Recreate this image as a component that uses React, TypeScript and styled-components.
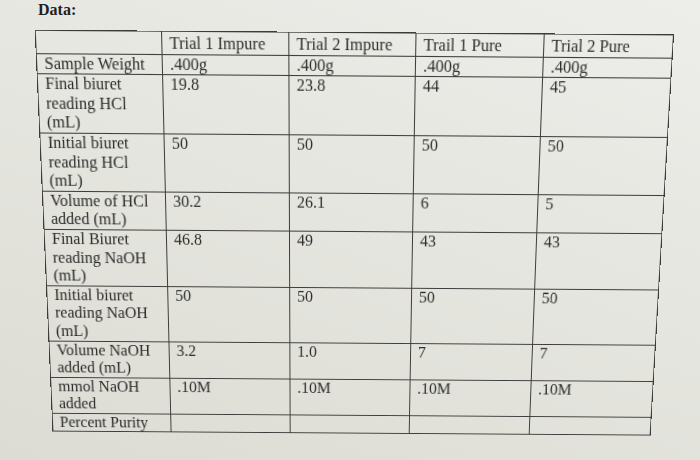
import React from "react";
import styled, { createGlobalStyle } from "styled-components";

const GlobalStyle = createGlobalStyle`
  html, body {
    margin: 0;
    padding: 0;
  }
  body {
    width: 700px;
    height: 460px;
    overflow: hidden;
    background: linear-gradient(200deg, #ededea 0%, #e6e6e0 45%, #dcdcd4 100%);
    font-family: "Liberation Serif", "Times New Roman", serif;
    color: #2e2e2e;
  }
`;

const Page = styled.div`
  display: flex;
  flex-direction: column;
  padding: 0 0 0 38px;
`;

const Heading = styled.h3`
  margin: 0;
  font-size: 16px;
  line-height: 19px;
  font-weight: bold;
  color: #1f1f1f;
`;

const Sheet = styled.div`
  margin: 19px 0 0 6px;
  width: 617px;
  transform: perspective(600px) rotateX(-5.7deg) rotate(0.4deg);
  transform-origin: 50% 50%;
`;

const Grid = styled.table`
  width: 617px;
  table-layout: fixed;
  border-collapse: collapse;
  font-size: 16px;
  line-height: 18.6px;
`;

const Col = styled.col<{ $w: number }>`
  width: ${(p) => p.$w}px;
`;

const Cell = styled.td<{ $head?: boolean }>`
  border: 1px solid #3c3c3c;
  padding: ${(p) => (p.$head ? "2px" : "0")} 4px 0 7px;
  vertical-align: top;
  text-align: left;
  font-weight: normal;
  color: #2e2e2e;
`;

const LabelCell = styled(Cell)`
  color: #2a2a2a;
`;

const rows: { label: string; values: string[] }[] = [
  { label: "Sample Weight", values: [".400g", ".400g", ".400g", ".400g"] },
  { label: "Final biuret reading HCl (mL)", values: ["19.8", "23.8", "44", "45"] },
  { label: "Initial biuret reading HCl (mL)", values: ["50", "50", "50", "50"] },
  { label: "Volume of HCl added (mL)", values: ["30.2", "26.1", "6", "5"] },
  { label: "Final Biuret reading NaOH (mL)", values: ["46.8", "49", "43", "43"] },
  { label: "Initial biuret reading NaOH (mL)", values: ["50", "50", "50", "50"] },
  { label: "Volume NaOH added (mL)", values: ["3.2", "1.0", "7", "7"] },
  { label: "mmol NaOH added", values: [".10M", ".10M", ".10M", ".10M"] },
  { label: "Percent Purity", values: ["", "", "", ""] },
];

const headers = ["Trial 1 Impure", "Trial 2 Impure", "Trail 1 Pure", "Trial 2 Pure"];

export default function App() {
  return (
    <>
      <GlobalStyle />
      <Page>
        <Heading>Data:</Heading>
        <Sheet>
          <Grid>
            <colgroup>
              <Col $w={122} />
              <Col $w={123} />
              <Col $w={123} />
              <Col $w={124} />
              <Col $w={125} />
            </colgroup>
            <tbody>
              <tr>
                <Cell $head />
                {headers.map((h) => (
                  <Cell $head key={h}>
                    {h}
                  </Cell>
                ))}
              </tr>
              {rows.map((r) => (
                <tr key={r.label}>
                  <LabelCell>{r.label}</LabelCell>
                  {r.values.map((v, i) => (
                    <Cell key={i}>{v}</Cell>
                  ))}
                </tr>
              ))}
            </tbody>
          </Grid>
        </Sheet>
      </Page>
    </>
  );
}
